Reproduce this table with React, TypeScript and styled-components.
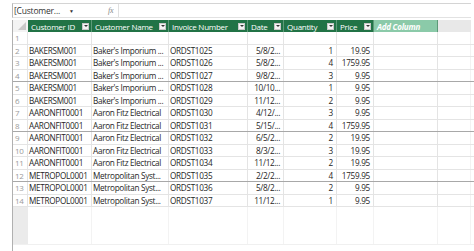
import React from "react";
import styled, { createGlobalStyle } from "styled-components";

const GlobalStyle = createGlobalStyle`
  html, body { margin: 0; padding: 0; background: #ffffff; }
  body { font-family: "Open Sans", "Noto Sans", sans-serif; }
`;

const COLS = "15px 64px 77px 79px 36px 53px 37px 64px 33px";

const Page = styled.div`
  width: 474px;
  height: 251px;
  padding: 3px 0 0 12px;
  box-sizing: border-box;
  overflow: hidden;
  display: flex;
  flex-direction: column;
`;

const FormulaBar = styled.div`
  display: flex;
  align-items: center;
  height: 13px;
  width: 458px;
  border-top: 1px solid #d4d4d4;
  border-bottom: 1px solid #e2e2e2;
  border-left: 1px solid #b8b8b8;
  font-size: 8.5px;
  letter-spacing: -0.2px;
  color: #333;
`;

const NameBox = styled.div`
  width: 91px;
  display: flex;
  align-items: center;
  padding-left: 1px;
  box-sizing: border-box;
  gap: 9px;
`;

const Caret = styled.span`
  font-size: 5px;
  color: #333;
`;

const Fx = styled.span`
  font-family: "Liberation Serif", serif;
  font-style: italic;
  font-size: 8px;
  color: #888;
  width: 10px;
  padding-left: 4px;
  border-right: 1px solid #e0e0e0;
  height: 100%;
  display: flex;
  align-items: center;
`;

const Grid = styled.div`
  margin-top: 2px;
  display: flex;
  flex-direction: column;
  border-left: 1px solid #b0b0b0;
  flex: 1;
`;

const HeaderRow = styled.div`
  display: grid;
  grid-template-columns: ${COLS};
  height: 12px;
`;

const Corner = styled.div`
  background: #f3f3f3;
  position: relative;
  &::after {
    content: "";
    position: absolute;
    right: 2px;
    bottom: 2px;
    border-style: solid;
    border-width: 0 0 8px 8px;
    border-color: transparent transparent #c8c8c8 transparent;
  }
`;

const HeadCell = styled.div<{ $variant?: "add" | "empty" }>`
  display: flex;
  align-items: center;
  justify-content: space-between;
  padding: 0 2px 0 3px;
  box-sizing: border-box;
  background: ${(p) =>
    p.$variant === "add" ? "#8bcaa9" : p.$variant === "empty" ? "#e8e8e8" : "#217346"};
  color: #ffffff;
  font-size: 8px;
  letter-spacing: -0.25px;
  font-style: ${(p) => (p.$variant === "add" ? "italic" : "normal")};
  font-weight: ${(p) => (p.$variant === "add" ? 700 : 400)};
  border-right: 1px solid ${(p) => (p.$variant === "empty" ? "#e8e8e8" : "#5c9a78")};
  white-space: nowrap;
  overflow: hidden;
`;

const Drop = styled.span`
  width: 7px;
  height: 7px;
  background: #f4f4f4;
  border: 1px solid #c8c8c8;
  box-sizing: border-box;
  display: flex;
  align-items: center;
  justify-content: center;
  flex-shrink: 0;
  &::after {
    content: "";
    border-style: solid;
    border-width: 2px 2px 0 2px;
    border-color: #333 transparent transparent transparent;
  }
`;

const Row = styled.div<{ $strong?: boolean }>`
  display: grid;
  grid-template-columns: ${COLS};
  height: 12.5px;
  box-sizing: border-box;
  border-bottom: ${(p) => (p.$strong ? "1.5px solid #a8a8a8" : "1px solid #e4e4e4")};
  font-size: 8.2px;
  letter-spacing: -0.3px;
  color: #262626;
`;

const NumCell = styled.div`
  color: #9a9a9a;
  padding-left: 2px;
  display: flex;
  align-items: center;
  font-size: 8px;
  white-space: nowrap;
  border-right: 1px solid #e4e4e4;
`;

const Cell = styled.div<{ $right?: boolean; $faint?: boolean }>`
  display: flex;
  align-items: center;
  justify-content: ${(p) => (p.$right ? "flex-end" : "flex-start")};
  padding: 0 3px 0 1px;
  box-sizing: border-box;
  border-right: 1px solid ${(p) => (p.$faint ? "#f2f2f2" : "#e4e4e4")};
  white-space: nowrap;
  overflow: hidden;
`;

const Blank = styled.div`
  display: grid;
  grid-template-columns: ${COLS};
  height: 37px;
  border-bottom: 1px solid #f0f0f0;
`;

const BlankNum = styled.div`
  background: #ebebeb;
`;

const BlankCell = styled.div`
  border-right: 1px solid #f3f3f3;
`;

type R = [string, string, string, string, string, string, string];

const rows: (R | null)[] = [
  null,
  ["BAKERSM001", "Baker's Imporium ...", "ORDST1025", "5/8/2...", "1", "19.95", ""],
  ["BAKERSM001", "Baker's Imporium ...", "ORDST1026", "5/8/2...", "4", "1759.95", ""],
  ["BAKERSM001", "Baker's Imporium ...", "ORDST1027", "9/8/2...", "3", "9.95", ""],
  ["BAKERSM001", "Baker's Imporium ...", "ORDST1028", "10/10...", "1", "9.95", ""],
  ["BAKERSM001", "Baker's Imporium ...", "ORDST1029", "11/12...", "2", "9.95", ""],
  ["AARONFIT0001", "Aaron Fitz Electrical", "ORDST1030", "4/12/...", "3", "9.95", ""],
  ["AARONFIT0001", "Aaron Fitz Electrical", "ORDST1031", "5/15/...", "4", "1759.95", ""],
  ["AARONFIT0001", "Aaron Fitz Electrical", "ORDST1032", "6/5/2...", "2", "19.95", ""],
  ["AARONFIT0001", "Aaron Fitz Electrical", "ORDST1033", "8/3/2...", "3", "19.95", ""],
  ["AARONFIT0001", "Aaron Fitz Electrical", "ORDST1034", "11/12...", "2", "19.95", ""],
  ["METROPOL0001", "Metropolitan Syst...", "ORDST1035", "2/2/2...", "4", "1759.95", ""],
  ["METROPOL0001", "Metropolitan Syst...", "ORDST1036", "5/8/2...", "2", "9.95", ""],
  ["METROPOL0001", "Metropolitan Syst...", "ORDST1037", "11/12...", "1", "9.95", ""],
];

const strongAfter = new Set([4, 8, 12]);

const headers = ["Customer ID", "Customer Name", "Invoice Number", "Date", "Quantity", "Price"];

export default function App() {
  return (
    <>
      <GlobalStyle />
      <Page>
        <FormulaBar>
          <NameBox>
            <span>[Customer...</span>
            <Caret>▼</Caret>
          </NameBox>
          <Fx>fx</Fx>
        </FormulaBar>
        <Grid>
          <HeaderRow>
            <Corner />
            {headers.map((h) => (
              <HeadCell key={h}>
                <span>{h}</span>
                <Drop />
              </HeadCell>
            ))}
            <HeadCell $variant="add">Add Column</HeadCell>
            <HeadCell $variant="empty" />
          </HeaderRow>
          {rows.map((r, i) => (
            <Row key={i} $strong={strongAfter.has(i + 1)}>
              <NumCell>{i + 1}</NumCell>
              <Cell>{r ? r[0] : ""}</Cell>
              <Cell>{r ? r[1] : ""}</Cell>
              <Cell>{r ? r[2] : ""}</Cell>
              <Cell $right>{r ? r[3] : ""}</Cell>
              <Cell $right>{r ? r[4] : ""}</Cell>
              <Cell $right>{r ? r[5] : ""}</Cell>
              <Cell>{r ? r[6] : ""}</Cell>
              <Cell $faint />
            </Row>
          ))}
          <Blank>
            <BlankNum />
            {Array.from({ length: 8 }).map((_, i) => (
              <BlankCell key={i} />
            ))}
          </Blank>
        </Grid>
      </Page>
    </>
  );
}
